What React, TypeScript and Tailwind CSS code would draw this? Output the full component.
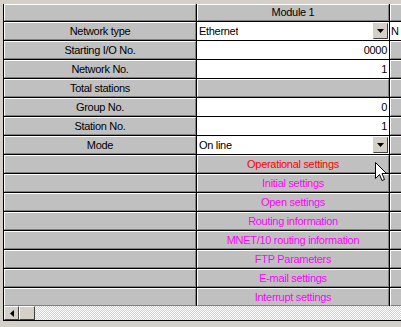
import React from "react";

const raised =
  "bg-[#c0c0c0] border border-t-white border-l-white border-r-[#808080] border-b-[#808080]";

type Row = {
  label: string;
  kind: "combo" | "num" | "off" | "btn";
  value?: string;
  color?: string;
};

const rows: Row[] = [
  { label: "Network type", kind: "combo", value: "Ethernet" },
  { label: "Starting I/O No.", kind: "num", value: "0000" },
  { label: "Network No.", kind: "num", value: "1" },
  { label: "Total stations", kind: "off" },
  { label: "Group No.", kind: "num", value: "0" },
  { label: "Station No.", kind: "num", value: "1" },
  { label: "Mode", kind: "combo", value: "On line" },
  { label: "", kind: "btn", value: "Operational settings", color: "text-[#ff0000]" },
  { label: "", kind: "btn", value: "Initial settings", color: "text-[#ff00ff]" },
  { label: "", kind: "btn", value: "Open settings", color: "text-[#ff00ff]" },
  { label: "", kind: "btn", value: "Routing information", color: "text-[#ff00ff]" },
  { label: "", kind: "btn", value: "MNET/10 routing information", color: "text-[#ff00ff]" },
  { label: "", kind: "btn", value: "FTP Parameters", color: "text-[#ff00ff]" },
  { label: "", kind: "btn", value: "E-mail settings", color: "text-[#ff00ff]" },
  { label: "", kind: "btn", value: "Interrupt settings", color: "text-[#ff00ff]" },
];

function DropArrow() {
  return (
    <span className="ml-auto mr-px flex h-[16px] w-[15px] shrink-0 items-center justify-center border border-t-[#d4d0c8] border-l-[#d4d0c8] border-r-[#404040] border-b-[#404040] bg-[#d4d0c8]">
      <svg width="7" height="4" viewBox="0 0 7 4">
        <path d="M0 0h7L3.5 4z" fill="#000" />
      </svg>
    </span>
  );
}

function ValueCell({ row }: { row: Row }) {
  if (row.kind === "combo") {
    return (
      <div className="flex h-[18px] items-center bg-white pl-[2px]">
        <span className="truncate">{row.value}</span>
        <DropArrow />
      </div>
    );
  }
  if (row.kind === "num") {
    return (
      <div className="flex h-[18px] items-center justify-end bg-white pr-[2px]">{row.value}</div>
    );
  }
  if (row.kind === "off") {
    return <div className={`h-[18px] ${raised}`} />;
  }
  return (
    <div className={`flex h-[18px] items-center justify-center ${raised} ${row.color}`}>
      {row.value}
    </div>
  );
}

export default function App() {
  return (
    <div
      className="relative h-[327px] w-[401px] overflow-hidden bg-[#d4d0c8] pl-[3px] pt-[4px] text-[11px] leading-none tracking-[-0.3px] text-black"
      style={{ fontFamily: '"Liberation Sans", Arial, sans-serif' }}
    >
      <div className="overflow-hidden border-l border-black">
        <div className="grid grid-cols-[192px_192px_120px] gap-px bg-black">
          <div className={`h-[17px] ${raised}`} />
          <div className={`flex h-[17px] items-center justify-center ${raised}`}>Module 1</div>
          <div className={`h-[17px] ${raised}`} />

          {rows.map((r, i) => (
            <React.Fragment key={i}>
              <div className={`flex h-[18px] items-center justify-center ${raised}`}>{r.label}</div>
              <ValueCell row={r} />
              {i === 0 ? (
                <div className="flex h-[18px] items-center bg-white pl-[1px]">N</div>
              ) : (
                <div className={`h-[18px] ${raised}`} />
              )}
            </React.Fragment>
          ))}
        </div>

        <div className="flex h-[15px] border-b border-black">
          <div className="flex w-[15px] items-center justify-center border border-t-white border-l-white border-r-[#404040] border-b-[#404040] bg-[#d4d0c8]">
            <svg width="4" height="7" viewBox="0 0 4 7">
              <path d="M4 0v7L0 3.5z" fill="#000" />
            </svg>
          </div>
          <div className="w-[16px] border border-t-white border-l-white border-r-[#404040] border-b-[#404040] bg-[#d4d0c8]" />
          <div className="flex-1 bg-[repeating-conic-gradient(#ffffff_0%_25%,#d4d0c8_0%_50%)] bg-[length:2px_2px]" />
        </div>
      </div>

      <svg
        className="absolute left-[375px] top-[162px]"
        width="13"
        height="20"
        viewBox="0 0 13 20"
      >
        <path
          d="M0.5 0.5V16.5L4.5 12.5L7 18.5L9.5 17.5L7 11.5H11.5Z"
          fill="#fff"
          stroke="#000"
          strokeWidth="1"
          strokeLinejoin="miter"
        />
      </svg>
    </div>
  );
}
